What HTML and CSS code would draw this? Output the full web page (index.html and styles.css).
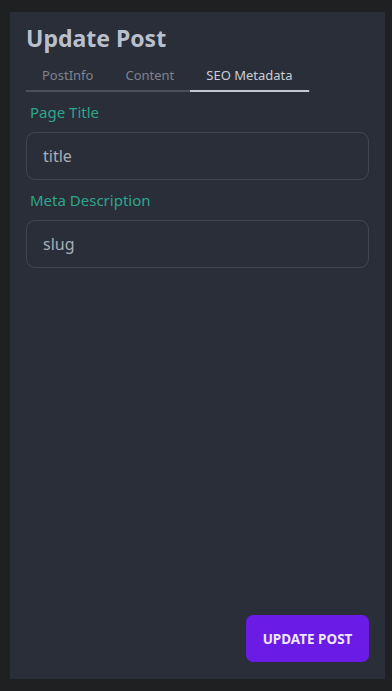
FILE: index.html
```html
<!DOCTYPE html>
<html lang="en">
<head>
<meta charset="utf-8">
<title>Update Post</title>
<link rel="stylesheet" href="styles.css">
</head>
<body>
<main class="card">
  <h1 class="title">Update Post</h1>
  <nav class="tabs">
    <span class="tab">PostInfo</span>
    <span class="tab">Content</span>
    <span class="tab active">SEO Metadata</span>
  </nav>
  <section class="fields">
    <label class="field">
      <span class="label">Page Title</span>
      <span class="input">title</span>
    </label>
    <label class="field">
      <span class="label">Meta Description</span>
      <span class="input">slug</span>
    </label>
  </section>
  <div class="actions">
    <button class="btn">UPDATE POST</button>
  </div>
</main>
</body>
</html>
```

FILE: styles.css
```css
* { box-sizing: border-box; }
html, body { height: 100%; }
body {
  margin: 0;
  background: #1f2022;
  font-family: "Noto Sans", "Open Sans", sans-serif;
  padding: 12px 7px 12px 10px;
}
.card {
  height: 667px;
  background: #2a2e38;
  padding: 0 16px 17px 16px;
  display: flex;
  flex-direction: column;
}
.title {
  margin: 0;
  padding-top: 11px;
  font-size: 23px;
  line-height: 30px;
  font-weight: 700;
  color: #b9c0cc;
}
.tabs {
  display: flex;
  margin-top: 6px;
  border-bottom: 2px solid #4a4f59;
  width: 284px;
}
.tab {
  padding: 7px 16px 6px;
  font-size: 13px;
  line-height: 18px;
  color: #7d838e;
  margin-bottom: -2px;
  border-bottom: 2px solid transparent;
}
.tab.active {
  color: #c9ced6;
  border-bottom-color: #c3c8d1;
}
.fields {
  display: flex;
  flex-direction: column;
  gap: 10px;
  margin-top: 10px;
}
.field {
  display: flex;
  flex-direction: column;
  gap: 10px;
}
.label {
  padding-left: 4px;
  font-size: 15px;
  line-height: 20px;
  color: #2da58c;
}
.input {
  display: block;
  height: 48px;
  border: 1px solid #40454f;
  border-radius: 9px;
  padding: 0 16px;
  font-size: 16px;
  line-height: 46px;
  color: #a7adb7;
}
.actions {
  margin-top: auto;
  display: flex;
  justify-content: flex-end;
}
.btn {
  width: 123px;
  height: 47px;
  border: none;
  border-radius: 7px;
  background: #6a1be6;
  color: #eee6ff;
  font-family: inherit;
  font-size: 13.5px;
  font-weight: 700;
}
```
